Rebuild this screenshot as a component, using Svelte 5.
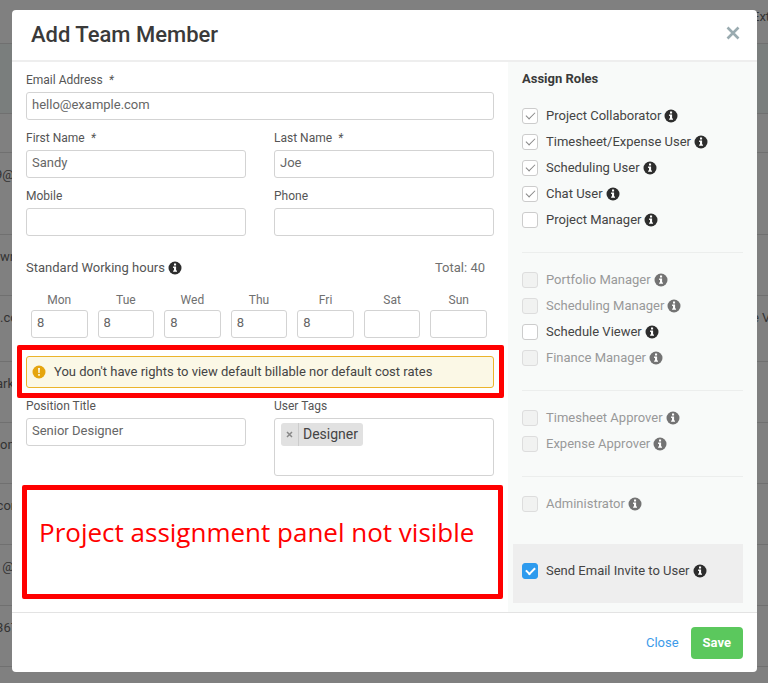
<script>

    let email = $state("hello@example.com");
    let firstName = $state("Sandy");
    let lastName = $state("Joe");
    let mobile = $state("");
    let phone = $state("");
    let position = $state("Senior Designer");
    let tags = $state(["Designer"]);
    let sendInvite = $state(true);

    let days = $state([
        { name: "Mon", hours: "8" },
        { name: "Tue", hours: "8" },
        { name: "Wed", hours: "8" },
        { name: "Thu", hours: "8" },
        { name: "Fri", hours: "8" },
        { name: "Sat", hours: "" },
        { name: "Sun", hours: "" }
    ]);

    let total = $derived(
        days.reduce((sum, d) => sum + (Number(d.hours) || 0), 0)
    );

    let roleGroups = $state([
        [
            { name: "Project Collaborator", on: true },
            { name: "Timesheet/Expense User", on: true },
            { name: "Scheduling User", on: true },
            { name: "Chat User", on: true },
            { name: "Project Manager", on: false }
        ],
        [
            { name: "Portfolio Manager", on: false, locked: true },
            { name: "Scheduling Manager", on: false, locked: true },
            { name: "Schedule Viewer", on: false },
            { name: "Finance Manager", on: false, locked: true }
        ],
        [
            { name: "Timesheet Approver", on: false, locked: true },
            { name: "Expense Approver", on: false, locked: true }
        ],
        [
            { name: "Administrator", on: false, locked: true }
        ]
    ]);

    // rows of the user list that show on both sides of the dialog
    const rows = [
        { left: "", right: "Ext", size: "head", align: "" },
        { left: "", right: "", size: "filter", align: "" },
        { left: "", right: "", size: "thin", align: "" },
        { left: "9@", right: "", size: "tall", align: "end" },
        { left: "wn", right: "", size: "", align: "" },
        { left: ".co", right: "e V", size: "mid", align: "" },
        { left: "ark", right: "", size: "", align: "end" },
        { left: "on", right: "", size: "", align: "" },
        { left: "con", right: "", size: "", align: "end wide" },
        { left: "@", right: "", size: "", align: "end" },
        { left: "367", right: "", size: "", align: "end wide" },
        { left: "", right: "", size: "last", align: "" }
    ];

    function removeTag(tag){
        tags = tags.filter(t => t !== tag);
    }

</script>

{#snippet info()}
    <svg class="info" viewBox="0 0 14 14" aria-hidden="true">
        <circle cx="7" cy="7" r="6.5" fill="currentColor" />
        <path d="M6 2.6h2.1v2H6zM5.1 5.6h3v3.9h.9v1.3H5.1V9.500H6V6.900h-.9z" fill="#fff" />
    </svg>
{/snippet}

<div class="page">

    <div class="list">
        {#each rows as row}
            <div class="row {row.size}">
                <span class="cell-left {row.align}">{row.left}</span>
                <span class="cell-right">{row.right}</span>
            </div>
        {/each}
    </div>

    <div class="overlay">
        <form class="modal" onsubmit={e => e.preventDefault()}>

            <header>
                <h1>Add Team Member</h1>
                <button type="button" class="dismiss" aria-label="Dismiss">
                    <svg viewBox="0 0 14 14">
                        <path d="M1.500 1.500l11 11M12.500 1.500l-11 11" />
                    </svg>
                </button>
            </header>

            <div class="body">

                <div class="details">

                    <div class="field">
                        <label for="email">Email Address &nbsp;<i>*</i></label>
                        <input id="email" class="text" type="text" bind:value={email} />
                    </div>

                    <div class="pair">
                        <div class="field">
                            <label for="first">First Name &nbsp;<i>*</i></label>
                            <input id="first" class="text" type="text" bind:value={firstName} />
                        </div>
                        <div class="field">
                            <label for="last">Last Name &nbsp;<i>*</i></label>
                            <input id="last" class="text" type="text" bind:value={lastName} />
                        </div>
                        <div class="field">
                            <label for="mobile">Mobile</label>
                            <input id="mobile" class="text" type="text" bind:value={mobile} />
                        </div>
                        <div class="field">
                            <label for="phone">Phone</label>
                            <input id="phone" class="text" type="text" bind:value={phone} />
                        </div>
                    </div>

                    <div class="hours-head">
                        <span class="with-info">Standard Working hours {@render info()}</span>
                        <span class="total">Total: {total}</span>
                    </div>

                    <div class="days">
                        {#each days as day}
                            <div class="day">
                                <label for={day.name}>{day.name}</label>
                                <input id={day.name} class="text" type="text" bind:value={day.hours} />
                            </div>
                        {/each}
                    </div>

                    <div class="notice">
                        <svg viewBox="0 0 14 14" aria-hidden="true">
                            <circle cx="7" cy="7" r="6.500" fill="#e5a50f" />
                            <path d="M6 3h2l-.3 5H6.300zM6.100 9h1.800v1.800H6.100z" fill="#fdf6dc" />
                        </svg>
                        <span>You don't have rights to view default billable nor default cost rates</span>
                        <div class="marker"></div>
                    </div>

                    <div class="pair">
                        <div class="field">
                            <label for="position">Position Title</label>
                            <input id="position" class="text" type="text" bind:value={position} />
                        </div>
                        <div class="field">
                            <span class="label">User Tags</span>
                            <div class="tags">
                                {#each tags as tag}
                                    <span class="tag">
                                        <button type="button" aria-label="Remove {tag}" onclick={() => removeTag(tag)}>
                                            <svg viewBox="0 0 7 7"><path d="M1 1l5 5M6 1l-5 5" /></svg>
                                        </button>
                                        <span class="tag-name">{tag}</span>
                                    </span>
                                {/each}
                            </div>
                        </div>
                    </div>

                    <div class="callout">Project assignment panel not visible</div>

                </div>

                <div class="roles">
                    <h2>Assign Roles</h2>

                    {#each roleGroups as group}
                        <div class="group">
                            {#each group as role}
                                <label class="check" class:locked={role.locked}>
                                    <input type="checkbox" bind:checked={role.on} disabled={role.locked} />
                                    <span class="with-info">{role.name} {@render info()}</span>
                                </label>
                            {/each}
                        </div>
                    {/each}

                    <div class="invite">
                        <label class="check">
                            <input type="checkbox" class="blue" bind:checked={sendInvite} />
                            <span class="with-info">Send Email Invite to User {@render info()}</span>
                        </label>
                    </div>
                </div>

            </div>

            <footer>
                <button type="button" class="close">Close</button>
                <button type="submit" class="save">Save</button>
            </footer>

        </form>
    </div>

</div>

<style>

:global(body){
    background:#808080;
}

.page{
    position:relative;
    min-height:100vh;
    overflow:hidden;
    font-family:Roboto, "Liberation Sans", sans-serif;
    font-size:13px;
    line-height:18px;
    color:#555;
}

/* list behind the dialog */

.row{
    display:flex;
    justify-content:space-between;
    box-sizing:border-box;
    height:61px;
    padding-top:13px;
    border-bottom:1px solid #707070;
    color:#333;
}

.row.head{
    height:44px;
    padding-top:8px;
}

.row.filter{
    height:70px;
    background:#7a7e7d;
}

.row.thin{
    height:39px;
}

.row.tall{
    height:82px;
}

.row.mid{
    height:66px;
}

.row.last{
    height:15px;
    border:none;
}

.cell-left{
    display:flex;
    width:14px;
}

.cell-left.end{
    justify-content:flex-end;
}

.cell-left.wide{
    width:18px;
}

.cell-right{
    width:16px;
    white-space:nowrap;
}

/* dialog */

.overlay{
    position:absolute;
    inset:0;
    padding:10px 11px 11px 12px;
}

.modal{
    background:#fff;
    border-radius:4px;
    overflow:hidden;
}

header{
    display:flex;
    align-items:center;
    justify-content:space-between;
    height:50px;
    padding:0 17px 0 19px;
    border-bottom:2px solid #eee;
}

h1{
    margin:0;
    font-size:22px;
    line-height:28px;
    font-weight:500;
    color:#3a3a3a;
}

button{
    border:none;
    padding:0;
    background:none;
    font:inherit;
    cursor:pointer;
}

.dismiss{
    display:flex;
    padding-bottom:4px;
}

.dismiss svg{
    width:14px;
    height:14px;
    stroke:#9aabb0;
    stroke-width:2.600;
    fill:none;
}

.body{
    display:grid;
    grid-template-columns:1fr 249px;
}

.details{
    padding:9px 14px 13px;
    min-width:0;
}

.pair{
    display:grid;
    grid-template-columns:1fr 1fr;
    gap:9px 28px;
    margin-top:9px;
}

.field{
    display:flex;
    flex-direction:column;
    gap:3px;
    min-width:0;
}

.field label,
.label,
.day label{
    font-size:12px;
}

.text{
    box-sizing:border-box;
    width:100%;
    height:28px;
    padding:0 5px 4px;
    border:1px solid #d3d3d3;
    border-radius:3px;
    background:#fff;
    font:inherit;
    color:#666;
}

.with-info{
    display:flex;
    align-items:center;
    gap:3px;
}

.info{
    width:14px;
    height:14px;
    color:#2d2d2d;
}

.hours-head{
    display:flex;
    justify-content:space-between;
    margin-top:23px;
    padding-right:9px;
}

.total{
    color:#707070;
}

.days{
    display:grid;
    grid-template-columns:repeat(7, 1fr);
    gap:10px;
    margin-top:14px;
    padding:0 7px 0 5px;
}

.day{
    display:flex;
    flex-direction:column;
    gap:1px;
    text-align:center;
    color:#707070;
}

.notice{
    position:relative;
    display:flex;
    align-items:center;
    gap:8px;
    box-sizing:border-box;
    height:32px;
    margin-top:18px;
    padding:0 5px;
    border:1px solid #ebb42c;
    border-radius:3px;
    background:#fbf8e6;
    color:#444;
}

.notice svg{
    width:14px;
    height:14px;
}

.marker{
    position:absolute;
    inset:-12px -11px -11px -10px;
    border:5px solid #f00;
    border-radius:2px;
    pointer-events:none;
}

.tags{
    box-sizing:border-box;
    height:58px;
    padding:4px 6px;
    border:1px solid #d3d3d3;
    border-radius:3px;
}

.tag{
    display:inline-flex;
    height:23px;
    border-radius:3px;
    background:#e1e1e1;
    font-size:14px;
    color:#444;
}

.tag button{
    display:grid;
    place-items:center;
    width:18px;
    border-right:1px solid #ccc;
}

.tag svg{
    width:7px;
    height:7px;
    stroke:#888;
    stroke-width:1.500;
}

.tag-name{
    padding:2px 5px 0 4px;
}

.callout{
    box-sizing:border-box;
    min-height:114px;
    margin:9px -9px 0 -4px;
    padding:24px 12px;
    border:5px solid #f00;
    border-radius:2px;
    font-family:"Open Sans", "Noto Sans", sans-serif;
    font-size:26px;
    line-height:36px;
    white-space:nowrap;
    color:#f00;
}

/* roles */

.roles{
    padding:8px 14px 9px;
    background:#f8faf9;
    min-width:0;
}

h2{
    margin:0 0 15px;
    font-size:13px;
    line-height:18px;
    font-weight:700;
    color:#3a3a3a;
}

.group + .group{
    margin-top:19px;
    padding-top:14px;
    border-top:1px solid #eceeed;
}

.check{
    display:flex;
    align-items:center;
    gap:8px;
    height:26px;
    white-space:nowrap;
    color:#444;
}

.check.locked{
    color:#999;
}

.locked .info{
    color:#737373;
}

.check input{
    appearance:none;
    display:grid;
    place-items:center;
    flex:none;
    box-sizing:border-box;
    width:16px;
    height:16px;
    margin:0;
    border:1px solid #ccc;
    border-radius:3px;
    background:#fff;
}

.check input:disabled{
    border-color:#ddd;
    background:#f1f2f1;
}

.check input:checked::after{
    content:"";
    width:8px;
    height:4px;
    margin-bottom:3px;
    border:solid #888;
    border-width:0 0 1px 1px;
    transform:rotate(-45deg);
}

.check input.blue:checked{
    border-color:#2e9bee;
    background:#2e9bee;
}

.check input.blue:checked::after{
    width:7px;
    border-color:#fff;
    border-width:0 0 2px 2px;
}

.invite{
    margin:27px 0 0 -9px;
    padding:14px 9px 19px;
    background:#eee;
}

footer{
    display:flex;
    align-items:center;
    justify-content:flex-end;
    gap:12px;
    height:59px;
    padding:0 14px;
    border-top:1px solid #e3e3e3;
}

.close{
    color:#3d9be9;
}

.save{
    height:32px;
    padding:0 12px;
    border-radius:4px;
    background:#5bc85d;
    font-weight:700;
    color:#fff;
}

</style>
